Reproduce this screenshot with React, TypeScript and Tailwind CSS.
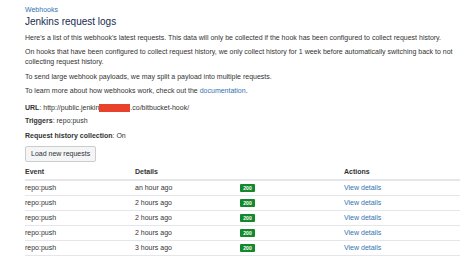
const rows = [
  { event: "repo:push", time: "an hour ago" },
  { event: "repo:push", time: "2 hours ago" },
  { event: "repo:push", time: "2 hours ago" },
  { event: "repo:push", time: "2 hours ago" },
  { event: "repo:push", time: "3 hours ago" },
];

export default function App() {
  return (
    <div className="w-[474px] h-[256px] overflow-hidden bg-white pl-[25px] pr-[14px] pt-[5px] font-['Liberation_Sans',Arial,sans-serif] text-[7px] leading-[10px] text-[#333]">
      <a className="block text-[#3572b0]">Webhooks</a>
      <h2 className="text-[10px] leading-[14px] text-[#172b4d]">Jenkins request logs</h2>
      <p className="mt-[4px]">
        Here's a list of this webhook's latest requests. This data will only be collected if the hook has been configured to collect request history.
      </p>
      <p className="mt-[4px]">
        On hooks that have been configured to collect request history, we only collect history for 1 week before automatically switching back to not collecting request history.
      </p>
      <p className="mt-[5px]">To send large webhook payloads, we may split a payload into multiple requests.</p>
      <p className="mt-[4px]">
        To learn more about how webhooks work, check out the <a className="text-[#3572b0]">documentation</a>.
      </p>
      <p className="mt-[7px] flex items-center">
        <b>URL</b>: http://public.jenkin
        <span className="inline-block w-[31px] h-[8px] bg-[#e8412c]" />
        .co/bitbucket-hook/
      </p>
      <p className="mt-[3px]">
        <b>Triggers</b>: repo:push
      </p>
      <p className="mt-[5px]">
        <b>Request history collection</b>: On
      </p>
      <button className="mt-[5px] h-[16px] px-[5px] rounded-[2px] border border-[#ccc] bg-[#f4f5f7] text-[7px] leading-[14px] text-[#333]">
        Load new requests
      </button>
      <table className="mt-[2px] w-[435px] table-fixed border-collapse">
        <thead>
          <tr className="border-b-2 border-[#e4e6ea] text-left">
            <th className="w-[110px] h-[16px] font-bold">Event</th>
            <th className="w-[105px] font-bold">Details</th>
            <th className="w-[104px]" />
            <th className="font-bold">Actions</th>
          </tr>
        </thead>
        <tbody>
          {rows.map((r, i) => (
            <tr key={i} className="border-b border-[#e4e6ea] h-[15px]">
              <td>{r.event}</td>
              <td>{r.time}</td>
              <td>
                <span className="inline-flex items-center justify-center w-[15px] h-[8px] rounded-[1px] bg-[#14892c] text-white text-[5px] font-bold leading-[8px]">
                  200
                </span>
              </td>
              <td>
                <a className="text-[#3572b0]">View details</a>
              </td>
            </tr>
          ))}
        </tbody>
      </table>
    </div>
  );
}
